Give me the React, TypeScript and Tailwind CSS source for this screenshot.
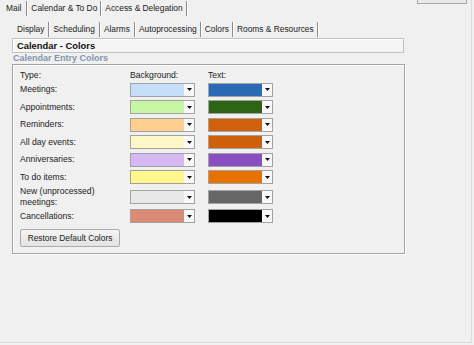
import React from "react";

const rows: { label: string[]; bg: string; fg: string; h: string }[] = [
  { label: ["Meetings:"], bg: "#c6dff8", fg: "#2a6ab4", h: "h-[17.5px]" },
  { label: ["Appointments:"], bg: "#c6f6a3", fg: "#2e6415", h: "h-[17.5px]" },
  { label: ["Reminders:"], bg: "#ffcf8f", fg: "#d0600b", h: "h-[17.5px]" },
  { label: ["All day events:"], bg: "#fff6c6", fg: "#cd6009", h: "h-[17.5px]" },
  { label: ["Anniversaries:"], bg: "#d6b8f4", fg: "#8b4fc4", h: "h-[17.5px]" },
  { label: ["To do items:"], bg: "#fff68c", fg: "#e87200", h: "h-[17.5px]" },
  { label: ["New (unprocessed)", "meetings:"], bg: "#e8e8e8", fg: "#666666", h: "h-[22px]" },
  { label: ["Cancellations:"], bg: "#db8a76", fg: "#000000", h: "h-[16px]" },
];

function Combo({ color }: { color: string }) {
  return (
    <div className="w-[65px] h-[14px] border border-[#a2a2a2] flex bg-white">
      <div className="flex-1" style={{ backgroundColor: color }} />
      <div className="w-[10px] bg-[#f8f8f8] flex items-center justify-center">
        <svg width="5" height="3" viewBox="0 0 5 3">
          <path d="M0 0h5L2.5 3z" fill="#111" />
        </svg>
      </div>
    </div>
  );
}

function Tab({ children, cls }: { children: React.ReactNode; cls: string }) {
  return (
    <div className={`h-[15px] flex items-center border-r border-[#8a8a8a] shadow-[1px_0_0_#ffffff] ${cls}`}>
      {children}
    </div>
  );
}

export default function App() {
  return (
    <div className="w-[474px] h-[345px] bg-[#f0f0f0] relative overflow-hidden font-['Liberation_Sans',Arial,sans-serif] text-[#222] text-[8.6px] leading-none">
      {/* Top tabs */}
      <div className="flex items-start h-[18px] pt-[1px] text-[8.4px]">
        <Tab cls="pl-[6px] pr-[5px]">Mail</Tab>
        <Tab cls="pl-[4px] pr-[3px]">Calendar &amp; To Do</Tab>
        <Tab cls="pl-[4px] pr-[3px]">Access &amp; Delegation</Tab>
        <div className="ml-auto mr-[7px] -mt-[11px] w-[50px] h-[14px] border border-[#a8a8a8] bg-[#e9e9e9]" />
      </div>

      {/* Sub tabs */}
      <div className="flex ml-[12px] mt-[4px] text-[8.4px]">
        <Tab cls="pl-[5px] pr-[4px]">Display</Tab>
        <Tab cls="pl-[4px] pr-[4px]">Scheduling</Tab>
        <Tab cls="pl-[4px] pr-[4px]">Alarms</Tab>
        <Tab cls="pl-[4px] pr-[3px]">Autoprocessing</Tab>
        <Tab cls="pl-[4px] pr-[3px]">Colors</Tab>
        <Tab cls="pl-[4px] pr-[3px]">Rooms &amp; Resources</Tab>
      </div>

      {/* Header box */}
      <div className="ml-[12px] mt-[1px] w-[392px] h-[15px] border border-[#c2c2c2] bg-[#f5f5f5] shadow-[inset_1px_1px_0_#ffffff] flex items-center pl-[4px] font-bold text-[9.4px] text-[#111]">
        Calendar - Colors
      </div>

      {/* Group label */}
      <div className="ml-[13px] h-[11px] flex items-center font-bold text-[9px] text-[#8295ab]">
        Calendar Entry Colors
      </div>

      {/* Group box */}
      <div className="ml-[12px] w-[393px] h-[190px] border border-[#a4a4a4] shadow-[1px_1px_0_#ffffff,inset_1px_1px_0_#ffffff] pl-[7px] pt-[4px]">
        <div className="flex items-center h-[12px]">
          <div className="w-[110px]">Type:</div>
          <div className="w-[78px]">Background:</div>
          <div>Text:</div>
        </div>
        {rows.map((r) => (
          <div key={r.label[0]} className={`flex items-center ${r.h}`}>
            <div className="w-[110px] flex flex-col gap-[2px]">
              {r.label.map((l) => (
                <span key={l}>{l}</span>
              ))}
            </div>
            <div className="w-[78px]">
              <Combo color={r.bg} />
            </div>
            <Combo color={r.fg} />
          </div>
        ))}
        <button className="mt-[5px] w-[100px] h-[18px] border border-[#acacac] rounded-[2px] bg-gradient-to-b from-[#f4f4f4] to-[#e3e3e3] text-[8.4px] text-[#222] flex items-center justify-center">
          Restore Default Colors
        </button>
      </div>

      {/* window edges */}
      <div className="absolute right-[2px] top-0 bottom-[2px] w-px bg-[#dcdcdc]" />
      <div className="absolute left-0 right-[2px] bottom-[2px] h-px bg-[#dcdcdc]" />
    </div>
  );
}
